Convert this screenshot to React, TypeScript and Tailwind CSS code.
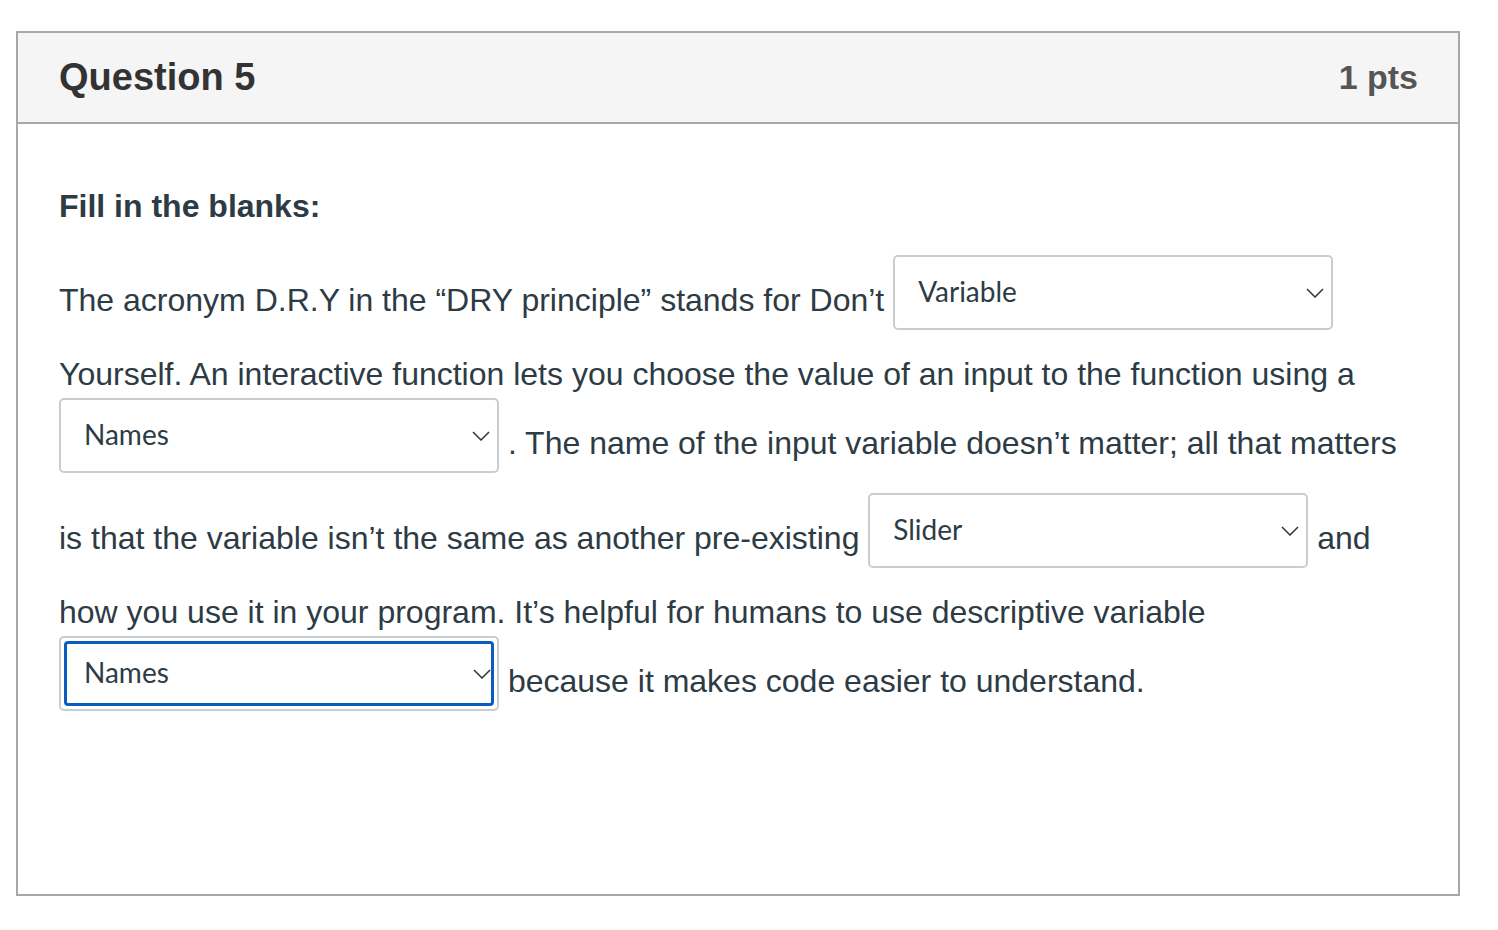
import React from "react";

const Chevron = () => (
  <svg width="18" height="10" viewBox="0 0 18 10" fill="none" className="shrink-0">
    <path d="M1 1L9 9L17 1" stroke="#333" strokeWidth="1.5" />
  </svg>
);

const Dropdown = ({ value, focused = false }: { value: string; focused?: boolean }) => {
  return (
    <span className="inline-block align-middle mt-0 mb-[20px]">
      <span className="flex w-[440px] h-[75px] rounded-[5px] border-2 border-[#c8cdd0] bg-white p-[3px]">
        <span
          className={
            focused
              ? "flex flex-1 items-center justify-between rounded-[4px] border-[3px] border-[#0b5cbf] pl-[17px] pr-0"
              : "flex flex-1 items-center justify-between border-[3px] border-transparent pl-[17px] pr-[1px]"
          }
        >
          <span className="font-['Lato',sans-serif] text-[28px] text-[#2d3b45] pb-[3px]">{value}</span>
          <Chevron />
        </span>
      </span>
    </span>
  );
};

export default function App() {
  return (
    <div className="min-h-screen bg-white pt-[31px] pl-[16px] font-['Liberation_Sans',Arial,sans-serif]">
      <div className="w-[1444px] h-[865px] border-2 border-[#a8a8a8] bg-white">
        <div className="flex h-[91px] items-center justify-between border-b-2 border-[#a8a8a8] bg-[#f5f5f5] pl-[41px] pr-[40px]">
          <h2 className="text-[38px] font-bold text-[#333]">Question 5</h2>
          <span className="text-[34px] font-bold text-[#555]">1 pts</span>
        </div>
        <div className="px-[41px] pt-[58px] text-[32px] leading-[48px] text-[#2d3b45]">
          <p className="font-bold">Fill in the blanks:</p>
          <p className="mt-[25px]">
            The acronym D.R.Y in the “DRY principle” stands for Don’t <Dropdown value="Variable" /> Yourself. An
            interactive function lets you choose the value of an input to the function using a{" "}
            <Dropdown value="Names" /> . The name of the input variable doesn’t matter; all that matters is that
            the variable isn’t the same as another pre-existing <Dropdown value="Slider" /> and how you use it in
            your program. It’s helpful for humans to use descriptive variable <Dropdown value="Names" focused />{" "}
            because it makes code easier to understand.
          </p>
        </div>
      </div>
    </div>
  );
}
